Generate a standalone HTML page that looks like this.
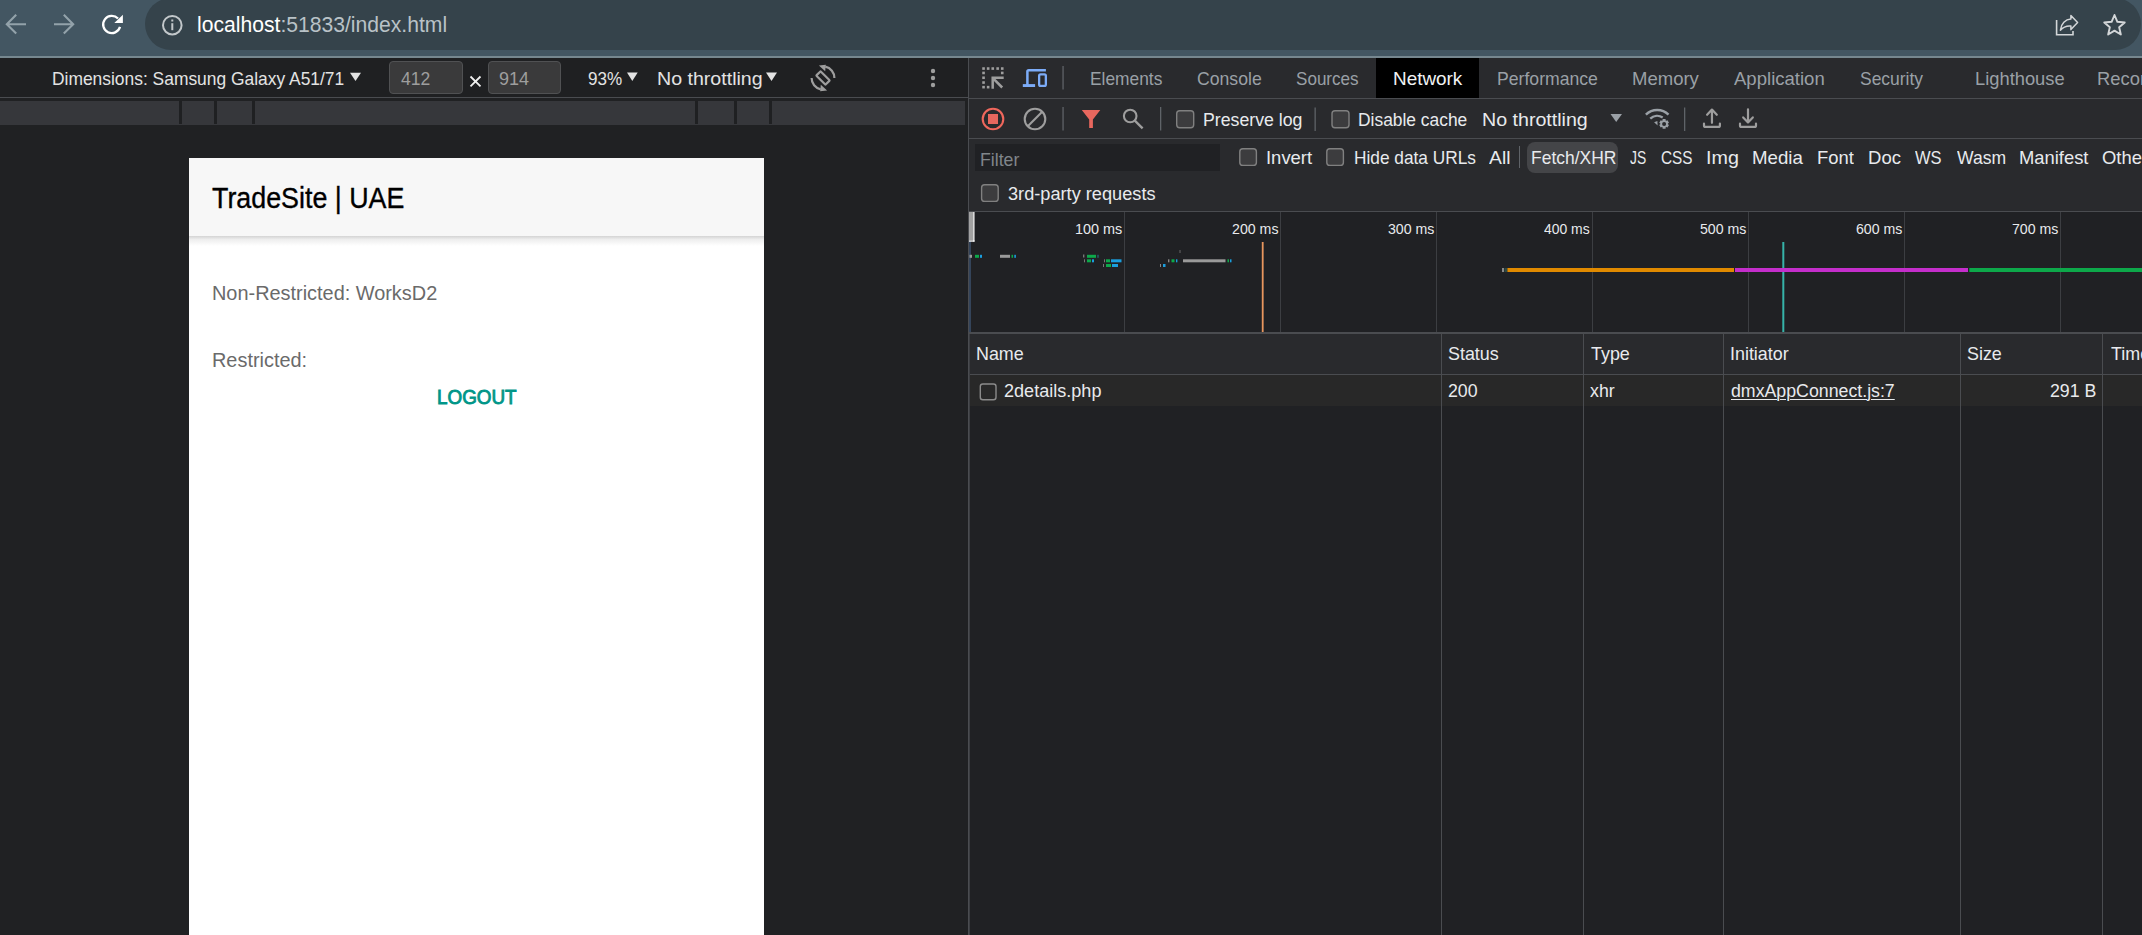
<!DOCTYPE html>
<html><head><meta charset="utf-8">
<style>
html,body{margin:0;padding:0;width:2142px;height:935px;overflow:hidden;background:#202124;position:relative}
.a{position:absolute}
.t{position:absolute;white-space:nowrap;line-height:1;font-family:"Liberation Sans",sans-serif;transform-origin:0 0}
svg{position:absolute;overflow:visible}
</style></head><body>
<!-- ============ BROWSER BAR ============ -->
<div class=a style="left:0;top:0;width:2142px;height:56px;background:#435662"></div>
<div class=a style="left:0;top:56px;width:2142px;height:2px;background:#76878f"></div>
<div class=a style="left:145px;top:-2px;width:1996px;height:52px;border-radius:26px;background:#35434b"></div>
<svg style="left:0;top:0" width="200" height="56">
  <g fill="none" stroke="#93a2aa" stroke-width="2.1">
    <path d="M26 24.2H7.5M16.2 14.8L6.8 24.2L16.2 33.6"/>
    <path d="M54 24.2H72.5M63.8 14.8L73.2 24.2L63.8 33.6"/>
  </g>
  <path d="M118.03 18.58A8.6 8.6 0 1 0 120.03 26.92" fill="none" stroke="#ffffff" stroke-width="2.3"/>
  <path d="M122.9 14.85V23.1H114.3Z" fill="#ffffff"/>
  <circle cx="172.3" cy="25.2" r="9.3" fill="none" stroke="#c3c8cb" stroke-width="2"/>
  <rect x="171.3" y="23.2" width="2" height="7" fill="#c3c8cb"/>
  <rect x="171.3" y="19.5" width="2" height="2" fill="#c3c8cb"/>
</svg>
<svg style="left:2040px;top:0" width="100" height="56">
  <path d="M16.6 20.1V34.8H33V31" fill="none" stroke="#d3d6d8" stroke-width="1.6"/>
  <path d="M20.4 30.2C21 23.5 25.5 19.3 30.9 19.1V15.5L37.6 22.5L30.9 29.6V26C26.5 25.6 22.8 27.4 20.4 30.2Z" fill="none" stroke="#d3d6d8" stroke-width="1.5" stroke-linejoin="round"/>
  <path d="M74.50 15.00 L77.38 21.82 L84.75 22.45 L79.16 27.29 L80.84 34.50 L74.50 30.68 L68.16 34.50 L69.84 27.29 L64.25 22.45 L71.62 21.82Z" fill="none" stroke="#d3d6d8" stroke-width="1.9" stroke-linejoin="round"/>
</svg>

<!-- ============ LEFT: DEVICE MODE ============ -->
<div class=a style="left:0;top:58px;width:968px;height:39px;background:#1f2022"></div>
<div class=a style="left:0;top:97px;width:968px;height:1px;background:#4a4c50"></div>
<div class=a style="left:0;top:98px;width:968px;height:837px;background:#202123"></div>
<div class=a style="left:0;top:101px;width:965px;height:24px;background:#36373b"></div>
<div class=a style="left:179px;top:101px;width:3px;height:23px;background:#1f2022"></div>
<div class=a style="left:214px;top:101px;width:3px;height:23px;background:#1f2022"></div>
<div class=a style="left:252px;top:101px;width:3px;height:23px;background:#1f2022"></div>
<div class=a style="left:695px;top:101px;width:3px;height:23px;background:#1f2022"></div>
<div class=a style="left:734px;top:101px;width:3px;height:23px;background:#1f2022"></div>
<div class=a style="left:769px;top:101px;width:3px;height:23px;background:#1f2022"></div>
<!-- inputs -->
<div class=a style="left:389px;top:61px;width:72px;height:31px;border:1px solid #505153;border-radius:4px;background:#3a3a3b;box-sizing:content-box"></div>
<div class=a style="left:488px;top:61px;width:71px;height:31px;border:1px solid #505153;border-radius:4px;background:#3a3a3b"></div>
<svg style="left:0;top:58px" width="968" height="40">
  <path d="M350 14.7H361L355.5 23Z" fill="#e3e3e3"/>
  <path d="M627 14.5H637.7L632.3 23Z" fill="#e3e3e3"/>
  <path d="M766 14.5H777L771.5 23Z" fill="#e3e3e3"/>
  <path d="M470.5 18.5L480.5 28.3M480.5 18.5L470.5 28.3" stroke="#f0f0f0" stroke-width="1.8"/>
  <!-- rotate icon -->
  <g transform="translate(0 -58)">
  <rect x="-3.05" y="-6.5" width="6.1" height="13" rx="0.6" transform="translate(823 78) rotate(-45)" fill="none" stroke="#9e9e9e" stroke-width="2.2"/>
  <path d="M825.3 66.7A11.4 11.4 0 0 1 834.4 78M820.7 89.3A11.4 11.4 0 0 1 811.6 78" fill="none" stroke="#9e9e9e" stroke-width="2.2"/>
  <path d="M818.9 65.4L825.8 64.8L825.2 71.2ZM827.1 90.6L820.2 91.2L820.8 84.8Z" fill="#9e9e9e"/>
  </g>
  <circle cx="933" cy="13" r="2.2" fill="#9e9e9e"/>
  <circle cx="933" cy="20" r="2.2" fill="#9e9e9e"/>
  <circle cx="933" cy="27" r="2.2" fill="#9e9e9e"/>
</svg>

<!-- page card -->
<div class=a style="left:189px;top:158px;width:575px;height:777px;background:#ffffff"></div>
<div class=a style="left:189px;top:158px;width:575px;height:78px;background:#f7f7f7"></div>
<div class=a style="left:189px;top:236px;width:575px;height:10px;background:linear-gradient(#d4d4d4,#eeeeee 35%,#ffffff)"></div>

<!-- ============ DEVTOOLS ============ -->
<div class=a style="left:968px;top:58px;width:1px;height:877px;background:#4a4c50"></div>
<div class=a style="left:969px;top:58px;width:1173px;height:40px;background:#292a2d"></div>
<div class=a style="left:969px;top:98px;width:1173px;height:1px;background:#4a4c50"></div>
<div class=a style="left:1376px;top:58px;width:103px;height:40px;background:#000000"></div>
<div class=a style="left:969px;top:99px;width:1173px;height:39px;background:#292a2d"></div>
<div class=a style="left:969px;top:138px;width:1173px;height:1px;background:#4a4c50"></div>
<div class=a style="left:969px;top:139px;width:1173px;height:72px;background:#292a2d"></div>
<div class=a style="left:969px;top:211px;width:1173px;height:1px;background:#4a4c50"></div>
<div class=a style="left:975px;top:144px;width:245px;height:27px;background:#202124"></div>
<div class=a style="left:1527px;top:142px;width:91px;height:31px;border-radius:8px;background:#444548"></div>
<div class=a style="left:1519px;top:146px;width:1px;height:22px;background:#5f6368"></div>
<!-- overview -->
<div class=a style="left:969px;top:212px;width:1173px;height:120px;background:#202124"></div>
<div class=a style="left:969px;top:332px;width:1173px;height:2px;background:#4a4c50"></div>
<!-- table -->
<div class=a style="left:969px;top:334px;width:1173px;height:40px;background:#292a2d"></div>
<div class=a style="left:969px;top:374px;width:1173px;height:1px;background:#4a4c50"></div>
<div class=a style="left:969px;top:375px;width:1173px;height:31px;background:#282828"></div>


<svg style="left:0;top:0" width="2142" height="935">
  <!-- devtools inspect icon -->
  <g fill="#9e9e9e"><rect x="982.25" y="67.25" width="2.6" height="2.6"/><rect x="986.85" y="67.25" width="2.6" height="2.6"/><rect x="991.45" y="67.25" width="2.6" height="2.6"/><rect x="996.35" y="67.25" width="2.6" height="2.6"/><rect x="1000.95" y="67.25" width="2.6" height="2.6"/><rect x="982.25" y="71.65" width="2.6" height="2.6"/><rect x="982.25" y="76.45" width="2.6" height="2.6"/><rect x="982.25" y="81.25" width="2.6" height="2.6"/><rect x="982.25" y="85.85" width="2.6" height="2.6"/><rect x="986.85" y="85.85" width="2.6" height="2.6"/><rect x="1000.95" y="71.65" width="2.6" height="2.6"/></g>
  <path d="M992.7 88.7V77.8H1003.7M992.9 78.1L1002.2 87.5" fill="none" stroke="#9e9e9e" stroke-width="2.5"/>
  <!-- device icon (blue) -->
  <path d="M1027.4 85V71.5Q1027.4 70.2 1028.7 70.2H1045.9" fill="none" stroke="#7cacf8" stroke-width="2.5"/>
  <rect x="1022.8" y="84.1" width="12.3" height="2.9" fill="#7cacf8"/>
  <rect x="1039.15" y="74.45" width="6.7" height="11.4" rx="1.4" fill="none" stroke="#7cacf8" stroke-width="2.3"/>
  <rect x="1062.4" y="66" width="1.3" height="23.5" fill="#5f6368"/>
  <!-- record -->
  <circle cx="993" cy="119" r="10.3" fill="none" stroke="#f0675c" stroke-width="2.1"/>
  <rect x="988" y="114" width="10" height="10" fill="#e8675e"/>
  <!-- clear -->
  <circle cx="1035" cy="119" r="10.3" fill="none" stroke="#9e9e9e" stroke-width="2.1"/>
  <path d="M1027.8 126.2L1042.2 111.8" stroke="#9e9e9e" stroke-width="2.1"/>
  <rect x="1062.4" y="107" width="1.3" height="23.5" fill="#5f6368"/>
  <!-- funnel -->
  <path d="M1081.8 110H1100.3L1092.9 119.5V128H1089.2V119.5Z" fill="#e8675e"/>
  <!-- search -->
  <circle cx="1130.2" cy="116" r="6.3" fill="none" stroke="#9e9e9e" stroke-width="2.1"/>
  <path d="M1134.8 120.6L1142.6 128.4" stroke="#9e9e9e" stroke-width="2.3"/>
  <rect x="1160" y="107" width="1.3" height="23.5" fill="#5f6368"/>
  <rect x="1314.5" y="107.5" width="1.3" height="23.5" fill="#5f6368"/>
  <rect x="1684" y="107.5" width="1.3" height="23.5" fill="#5f6368"/>
  <!-- checkboxes -->
  <g fill="#3c3c3e" stroke="#808080" stroke-width="1.4">
    <rect x="1176.7" y="110.8" width="17" height="17" rx="3"/>
    <rect x="1332" y="110.8" width="17" height="17" rx="3"/>
    <rect x="1239.8" y="148.8" width="16.6" height="16.6" rx="3"/>
    <rect x="1326.8" y="148.8" width="16.6" height="16.6" rx="3"/>
    <rect x="981.6" y="184.8" width="16.6" height="16.6" rx="3"/>
  </g>
  <rect x="980.3" y="384" width="15.7" height="15.7" rx="2.5" fill="none" stroke="#8a8a8a" stroke-width="1.4"/>
  <!-- throttling dropdown triangle -->
  <path d="M1610.5 114H1622L1616.2 122Z" fill="#9aa0a6"/>
  <!-- wifi gear -->
  <path d="M1645.88 114.57A16.3 16.3 0 0 1 1668.52 114.57M1650.24 118.57A10.4 10.4 0 0 1 1662.71 117.48" fill="none" stroke="#9aa0a6" stroke-width="2.4"/>
  <path d="M1654.1 122.3L1657.4 121L1657.6 125.4Z" fill="#9aa0a6"/>
  <path d="M1662.55 120.43 L1662.62 119.12 L1665.58 119.12 L1665.65 120.43 L1666.33 120.82 L1667.50 120.23 L1668.98 122.79 L1667.88 123.51 L1667.88 124.29 L1668.98 125.01 L1667.50 127.57 L1666.33 126.98 L1665.65 127.37 L1665.58 128.68 L1662.62 128.68 L1662.55 127.37 L1661.87 126.98 L1660.70 127.57 L1659.22 125.01 L1660.32 124.29 L1660.32 123.51 L1659.22 122.79 L1660.70 120.23 L1661.87 120.82Z M1666.10 123.90 A2.0 2.0 0 1 0 1662.10 123.90 A2.0 2.0 0 1 0 1666.10 123.90Z" fill="#9aa0a6" fill-rule="evenodd"/>
  <!-- upload / download -->
  <g fill="none" stroke="#9e9e9e" stroke-width="2.2" stroke-linecap="round" stroke-linejoin="round">
    <path d="M1704 123.6V125.4Q1704 126.9 1705.5 126.9H1718.4Q1719.9 126.9 1719.9 125.4V123.6"/>
    <path d="M1711.95 122.8V109.8M1707.1 114.8L1711.95 109.6L1716.8 114.8"/>
    <path d="M1740 123.6V125.4Q1740 126.9 1741.5 126.9H1754.5Q1756 126.9 1756 125.4V123.6"/>
    <path d="M1748 109.3V122.3M1743.2 117.4L1748 122.4L1752.8 117.4"/>
  </g>
  <!-- overview grid -->
  <g fill="#3c3e42">
    <rect x="1124" y="212" width="1" height="120"/>
    <rect x="1280" y="212" width="1" height="120"/>
    <rect x="1436" y="212" width="1" height="120"/>
    <rect x="1592" y="212" width="1" height="120"/>
    <rect x="1748" y="212" width="1" height="120"/>
    <rect x="1904" y="212" width="1" height="120"/>
    <rect x="2060" y="212" width="1" height="120"/>
  </g>
  <rect x="969" y="241" width="2" height="91" fill="#34445a"/>
  <rect x="969" y="212" width="4.2" height="28.4" fill="#a2a2a2"/><rect x="973.2" y="212" width="1.3" height="29.6" fill="#ffffff"/><rect x="969" y="240.4" width="5.5" height="1.3" fill="#ffffff"/>
  <rect x="1261.8" y="242" width="1.8" height="90" fill="#e8965e"/>
  <rect x="1782.3" y="242" width="2" height="90" fill="#36b3a8"/>
  <!-- big bar -->
  <rect x="1502" y="268" width="2" height="4" fill="#888"/>
  <rect x="1504.5" y="268" width="2.5" height="4" fill="#2c4a44"/>
  <rect x="1507.4" y="268" width="226.6" height="4" fill="#e08a00"/>
  <rect x="1735" y="268" width="233" height="4" fill="#c42ecb"/>
  <rect x="1969.3" y="268" width="173" height="4" fill="#0da84a"/>
  <!-- small bars -->
  <g>
    <rect x="969.5" y="254.8" width="2.5" height="3" fill="#9a9a9a"/>
    <rect x="975" y="254.8" width="4" height="3" fill="#0da84a"/>
    <rect x="980" y="254.8" width="2" height="3" fill="#1a9ede"/>
    <rect x="1000" y="254.8" width="10" height="3" fill="#9a9a9a"/>
    <rect x="1011.5" y="254.8" width="1.6" height="3" fill="#0da84a"/>
    <rect x="1014.3" y="254.8" width="1.6" height="3" fill="#1a9ede"/>
    <rect x="1083" y="254.5" width="1.4" height="3" fill="#777"/>
    <rect x="1087" y="254.8" width="9" height="3" fill="#0da84a"/>
    <rect x="1097" y="254.8" width="2" height="3" fill="#23505a"/>
    <rect x="1084" y="259.3" width="1" height="3" fill="#777"/>
    <rect x="1087" y="259.3" width="4" height="3" fill="#0da84a"/>
    <rect x="1092" y="259.3" width="2" height="3" fill="#1a9ede"/>
    <rect x="1104" y="259.3" width="1" height="3" fill="#777"/>
    <rect x="1106" y="259.3" width="4" height="3" fill="#0da84a"/>
    <rect x="1111" y="259.3" width="10.5" height="3" fill="#1a9ede"/>
    <rect x="1103" y="264" width="1" height="3" fill="#777"/>
    <rect x="1106" y="264" width="5" height="3" fill="#0da84a"/>
    <rect x="1112" y="264" width="6" height="3" fill="#1a9ede"/>
    <rect x="1160" y="264" width="1" height="3" fill="#888"/>
    <rect x="1163" y="264" width="2.5" height="3" fill="#1a9ede"/>
    <rect x="1168" y="259.3" width="1.4" height="3" fill="#888"/>
    <rect x="1171.5" y="259.3" width="3" height="3" fill="#0da84a"/>
    <rect x="1176" y="259.3" width="1.4" height="3" fill="#1a9ede"/>
    <rect x="1179.5" y="250" width="1" height="3" fill="#666"/>
    <rect x="1183" y="259.3" width="42.5" height="3" fill="#9a9a9a"/>
    <rect x="1227.5" y="259.3" width="1.5" height="3" fill="#0da84a"/>
    <rect x="1230" y="259.3" width="1.5" height="3" fill="#1a9ede"/>
  </g>
  <!-- table column dividers -->
  <rect x="969" y="334" width="1" height="601" fill="#3c3e42"/>
  <g fill="#4a4c50">
    <rect x="1441" y="334" width="1" height="601"/>
    <rect x="1583" y="334" width="1" height="601"/>
    <rect x="1723" y="334" width="1" height="601"/>
    <rect x="1960" y="334" width="1" height="601"/>
    <rect x="2102" y="334" width="1" height="601"/>
  </g>
</svg>

<div class=t style="left:196.53px;top:14px;font-size:21.739px;color:#ffffff;font-weight:400;transform:scaleX(0.9725);">localhost<span style="color:#b9c2c7">:51833/index.html</span></div>
<div class=t style="left:52.10px;top:70px;font-size:18.841px;color:#e3e3e3;font-weight:400;transform:scaleX(0.9245);">Dimensions: Samsung Galaxy A51/71</div>
<div class=t style="left:400.61px;top:70px;font-size:18.261px;color:#9e9e9e;font-weight:400;transform:scaleX(0.9616);">412</div>
<div class=t style="left:498.87px;top:70px;font-size:18.261px;color:#9e9e9e;font-weight:400;transform:scaleX(0.9875);">914</div>
<div class=t style="left:587.94px;top:70px;font-size:18.696px;color:#e3e3e3;font-weight:400;transform:scaleX(0.9131);">93%</div>
<div class=t style="left:656.71px;top:70px;font-size:18.841px;color:#e3e3e3;font-weight:400;transform:scaleX(1.0410);">No throttling</div>
<div class=t style="left:1090.45px;top:70px;font-size:18.841px;color:#9aa0a6;font-weight:400;transform:scaleX(0.9217);">Elements</div>
<div class=t style="left:1196.80px;top:70px;font-size:18.841px;color:#9aa0a6;font-weight:400;transform:scaleX(0.9370);">Console</div>
<div class=t style="left:1296.16px;top:70px;font-size:18.841px;color:#9aa0a6;font-weight:400;transform:scaleX(0.9065);">Sources</div>
<div class=t style="left:1393.02px;top:70px;font-size:18.841px;color:#f1f3f4;font-weight:400;transform:scaleX(1.0037);">Network</div>
<div class=t style="left:1496.94px;top:70px;font-size:18.841px;color:#9aa0a6;font-weight:400;transform:scaleX(0.9364);">Performance</div>
<div class=t style="left:1631.81px;top:70px;font-size:18.841px;color:#9aa0a6;font-weight:400;transform:scaleX(0.9835);">Memory</div>
<div class=t style="left:1733.98px;top:70px;font-size:18.841px;color:#9aa0a6;font-weight:400;transform:scaleX(0.9852);">Application</div>
<div class=t style="left:1859.77px;top:70px;font-size:18.841px;color:#9aa0a6;font-weight:400;transform:scaleX(0.9274);">Security</div>
<div class=t style="left:1974.83px;top:70px;font-size:18.841px;color:#9aa0a6;font-weight:400;transform:scaleX(0.9731);">Lighthouse</div>
<div class=t style="left:2097.15px;top:70px;font-size:18.841px;color:#9aa0a6;font-weight:400;transform:scaleX(0.9758);">Recorder</div>
<div class=t style="left:1203.21px;top:111px;font-size:18.551px;color:#e8eaed;font-weight:400;transform:scaleX(0.9548);">Preserve log</div>
<div class=t style="left:1358.08px;top:111px;font-size:18.551px;color:#e8eaed;font-weight:400;transform:scaleX(0.9380);">Disable cache</div>
<div class=t style="left:1481.68px;top:111px;font-size:18.551px;color:#e8eaed;font-weight:400;transform:scaleX(1.0578);">No throttling</div>
<div class=t style="left:979.98px;top:151px;font-size:18.406px;color:#80868b;font-weight:400;transform:scaleX(0.9622);">Filter</div>
<div class=t style="left:1265.77px;top:149px;font-size:18.406px;color:#e8eaed;font-weight:400;transform:scaleX(1.0029);">Invert</div>
<div class=t style="left:1353.53px;top:149px;font-size:18.406px;color:#e8eaed;font-weight:400;transform:scaleX(0.9395);">Hide data URLs</div>
<div class=t style="left:1488.63px;top:149px;font-size:18.406px;color:#e8eaed;font-weight:400;transform:scaleX(1.0513);">All</div>
<div class=t style="left:1531.26px;top:149px;font-size:18.406px;color:#e8eaed;font-weight:400;transform:scaleX(0.9494);">Fetch/XHR</div>
<div class=t style="left:1630.31px;top:149px;font-size:18.406px;color:#e8eaed;font-weight:400;transform:scaleX(0.7548);">JS</div>
<div class=t style="left:1661.00px;top:149px;font-size:18.406px;color:#e8eaed;font-weight:400;transform:scaleX(0.8339);">CSS</div>
<div class=t style="left:1705.64px;top:149px;font-size:18.406px;color:#e8eaed;font-weight:400;transform:scaleX(1.0715);">Img</div>
<div class=t style="left:1752.39px;top:149px;font-size:18.406px;color:#e8eaed;font-weight:400;transform:scaleX(1.0160);">Media</div>
<div class=t style="left:1816.91px;top:149px;font-size:18.406px;color:#e8eaed;font-weight:400;transform:scaleX(0.9998);">Font</div>
<div class=t style="left:1868.13px;top:149px;font-size:18.406px;color:#e8eaed;font-weight:400;transform:scaleX(1.0071);">Doc</div>
<div class=t style="left:1914.60px;top:149px;font-size:18.406px;color:#e8eaed;font-weight:400;transform:scaleX(0.8995);">WS</div>
<div class=t style="left:1956.65px;top:149px;font-size:18.406px;color:#e8eaed;font-weight:400;transform:scaleX(0.9547);">Wasm</div>
<div class=t style="left:2018.53px;top:149px;font-size:18.406px;color:#e8eaed;font-weight:400;transform:scaleX(0.9988);">Manifest</div>
<div class=t style="left:2102.30px;top:149px;font-size:18.406px;color:#e8eaed;font-weight:400;transform:scaleX(1.0030);">Other</div>
<div class=t style="left:1008.43px;top:185px;font-size:18.696px;color:#e8eaed;font-weight:400;transform:scaleX(0.9731);">3rd-party requests</div>
<div class=t style="left:1074.73px;top:221px;font-size:15.072px;color:#e8eaed;font-weight:400;transform:scaleX(0.9578);">100 ms</div>
<div class=t style="left:1231.54px;top:221px;font-size:15.072px;color:#e8eaed;font-weight:400;transform:scaleX(0.9408);">200 ms</div>
<div class=t style="left:1387.60px;top:221px;font-size:15.072px;color:#e8eaed;font-weight:400;transform:scaleX(0.9396);">300 ms</div>
<div class=t style="left:1544.39px;top:221px;font-size:15.072px;color:#e8eaed;font-weight:400;transform:scaleX(0.9251);">400 ms</div>
<div class=t style="left:1699.62px;top:221px;font-size:15.072px;color:#e8eaed;font-weight:400;transform:scaleX(0.9391);">500 ms</div>
<div class=t style="left:1855.66px;top:221px;font-size:15.072px;color:#e8eaed;font-weight:400;transform:scaleX(0.9383);">600 ms</div>
<div class=t style="left:2011.66px;top:221px;font-size:15.072px;color:#e8eaed;font-weight:400;transform:scaleX(0.9382);">700 ms</div>
<div class=t style="left:975.80px;top:345px;font-size:18.841px;color:#e8eaed;font-weight:400;transform:scaleX(0.9500);">Name</div>
<div class=t style="left:1448.45px;top:345px;font-size:18.841px;color:#e8eaed;font-weight:400;transform:scaleX(0.9500);">Status</div>
<div class=t style="left:1591.30px;top:345px;font-size:18.841px;color:#e8eaed;font-weight:400;transform:scaleX(0.9500);">Type</div>
<div class=t style="left:1730.20px;top:345px;font-size:18.841px;color:#e8eaed;font-weight:400;transform:scaleX(0.9500);">Initiator</div>
<div class=t style="left:1967.35px;top:345px;font-size:18.841px;color:#e8eaed;font-weight:400;transform:scaleX(0.9500);">Size</div>
<div class=t style="left:2110.70px;top:345px;font-size:18.841px;color:#e8eaed;font-weight:400;transform:scaleX(0.9500);">Time</div>
<div class=t style="left:1004.36px;top:382px;font-size:18.696px;color:#e8eaed;font-weight:400;transform:scaleX(0.9670);">2details.php</div>
<div class=t style="left:1448.15px;top:382px;font-size:18.696px;color:#e8eaed;font-weight:400;transform:scaleX(0.9500);">200</div>
<div class=t style="left:1590.15px;top:382px;font-size:18.696px;color:#e8eaed;font-weight:400;transform:scaleX(0.9500);">xhr</div>
<div class=t style="left:1731.36px;top:382px;font-size:18.696px;color:#e8eaed;font-weight:400;transform:scaleX(0.9496);text-decoration:underline;text-underline-offset:2px;text-decoration-thickness:1px;">dmxAppConnect.js:7</div>
<div class=t style="left:2049.80px;top:382px;font-size:18.696px;color:#e8eaed;font-weight:400;transform:scaleX(0.9500);">291 B</div>
<div class=t style="left:211.97px;top:184px;font-size:28.841px;color:#000000;font-weight:400;transform:scaleX(0.9309);-webkit-text-stroke:0.35px #000;">TradeSite | UAE</div>
<div class=t style="left:211.65px;top:283px;font-size:20.290px;color:#6a6a6a;font-weight:400;transform:scaleX(0.9811);">Non-Restricted: WorksD2</div>
<div class=t style="left:211.65px;top:350px;font-size:20.290px;color:#6a6a6a;font-weight:400;transform:scaleX(0.9809);">Restricted:</div>
<div class=t style="left:437.34px;top:387px;font-size:20.000px;color:#009688;font-weight:400;transform:scaleX(0.9421);-webkit-text-stroke:0.9px #009688;">LOGOUT</div>
</body></html>
